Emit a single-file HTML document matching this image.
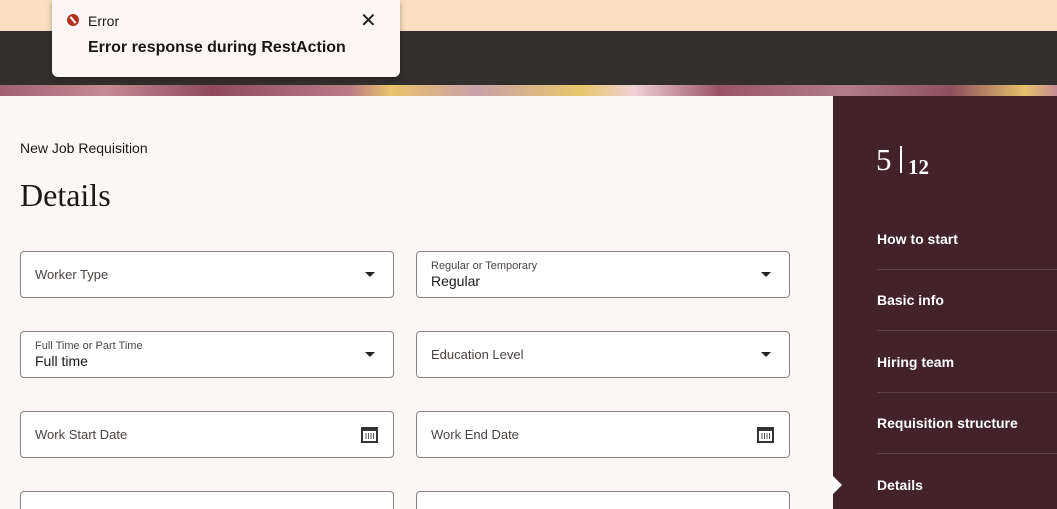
<!DOCTYPE html>
<html><head><style>
*{box-sizing:border-box;margin:0;padding:0}
html,body{width:1057px;height:509px;overflow:hidden}
body{background:#fcf8f7;font-family:"Liberation Sans",sans-serif;position:relative}
.top{position:absolute;left:0;top:0;width:1057px;height:31px;background:#f9dfbf}
.dark{position:absolute;left:0;top:31px;width:1057px;height:54px;background:#322f2c}
.band{position:absolute;left:0;top:85px;width:1057px;height:11px;background:linear-gradient(90deg,#a0606e 0,#c58b95 10%,#8e4a5a 20%,#b97a86 33%,#e9c46a 37%,#c9a0a8 45%,#e8c86a 55%,#efd0d6 60%,#9a5565 68%,#b17d88 80%,#8d4f5d 90%,#e5c26b 97%,#c58b95 100%)}
.main{position:absolute;left:0;top:96px;width:833px;height:413px;background:#fcf8f7;overflow:hidden}
.side{position:absolute;left:833px;top:96px;width:224px;height:413px;background:#42232b;color:#fff;overflow:hidden}
.toast{position:absolute;left:52px;top:0;width:348px;height:77px;background:#fcf6f5;border-radius:0 0 6px 6px;box-shadow:0 2px 6px rgba(0,0,0,.3)}
.f{position:absolute;width:374px;height:47px;background:#fff;border:1px solid #8a8583;border-radius:4px}
.lbl{position:absolute;left:14px;top:15px;font-size:13px;color:#4a4542}
.sl{position:absolute;left:14px;top:8px;font-size:11px;color:#4a4542}
.v{position:absolute;left:14px;top:21px;font-size:14px;color:#1a1816}
.arr{position:absolute;right:18px;top:20px;width:0;height:0;border-left:5px solid transparent;border-right:5px solid transparent;border-top:5px solid #222}
.cal{position:absolute;right:15px;top:15px;width:17px;height:16px;border:2px solid #333;border-top-width:4px;background:repeating-linear-gradient(90deg,#555 0 1px,#fff 1px 2.5px);background-clip:content-box;padding:2px}
.nav{position:absolute;left:44px;width:180px;font-size:14px;font-weight:bold;border-bottom:1px solid #5e434a;height:61px}
.nav span{position:absolute;top:22px}
</style></head><body>
<div class="top"></div><div class="dark"></div><div class="band"></div>
<div class="main">
<div style="position:absolute;left:20px;top:44px;font-size:14px;color:#1a1816">New Job Requisition</div>
<div style="position:absolute;left:20px;top:81px;font-size:32px;font-family:'Liberation Serif',serif;color:#1a1816">Details</div>
<div class="f" style="left:20px;top:155px"><div class="lbl">Worker Type</div><div class="arr"></div></div>
<div class="f" style="left:416px;top:155px"><div class="sl">Regular or Temporary</div><div class="v">Regular</div><div class="arr"></div></div>
<div class="f" style="left:20px;top:235px"><div class="sl">Full Time or Part Time</div><div class="v">Full time</div><div class="arr"></div></div>
<div class="f" style="left:416px;top:235px"><div class="lbl">Education Level</div><div class="arr"></div></div>
<div class="f" style="left:20px;top:315px"><div class="lbl">Work Start Date</div><div class="cal"></div></div>
<div class="f" style="left:416px;top:315px"><div class="lbl">Work End Date</div><div class="cal"></div></div>
<div class="f" style="left:20px;top:395px;height:18px;border-bottom:none;border-radius:4px 4px 0 0"></div>
<div class="f" style="left:416px;top:395px;height:18px;border-bottom:none;border-radius:4px 4px 0 0"></div>
</div>
<div class="side">
<div style="position:absolute;left:43px;top:46px;font-family:'Liberation Serif',serif;font-size:31px">5</div>
<div style="position:absolute;left:67px;top:50px;width:2px;height:27px;background:#fff"></div>
<div style="position:absolute;left:75px;top:59px;font-family:'Liberation Serif',serif;font-size:21px;font-weight:bold">12</div>
<div class="nav" style="top:113px"><span>How to start</span></div>
<div class="nav" style="top:174px"><span>Basic info</span></div>
<div class="nav" style="top:236px"><span>Hiring team</span></div>
<div class="nav" style="top:297px"><span>Requisition structure</span></div>
<div class="nav" style="top:359px;height:50px;border:none"><span>Details</span></div>
<div style="position:absolute;left:0;top:380px;border-top:9px solid transparent;border-bottom:9px solid transparent;border-left:9px solid #fff"></div>
</div>
<div class="toast">
<div style="position:absolute;left:15px;top:14px;width:12px;height:12px;border-radius:50%;background:#b3311f"><div style="position:absolute;left:5px;top:2px;width:2px;height:8px;background:#fff;transform:rotate(-40deg)"></div></div>
<div style="position:absolute;left:36px;top:13px;font-size:14px;color:#1a1816">Error</div>
<div style="position:absolute;left:308px;top:8px;font-size:20px;color:#222">✕</div>
<div style="position:absolute;left:36px;top:39px;font-size:16px;font-weight:bold;color:#1a1816">Error response during RestAction</div>
</div>
</body></html>
